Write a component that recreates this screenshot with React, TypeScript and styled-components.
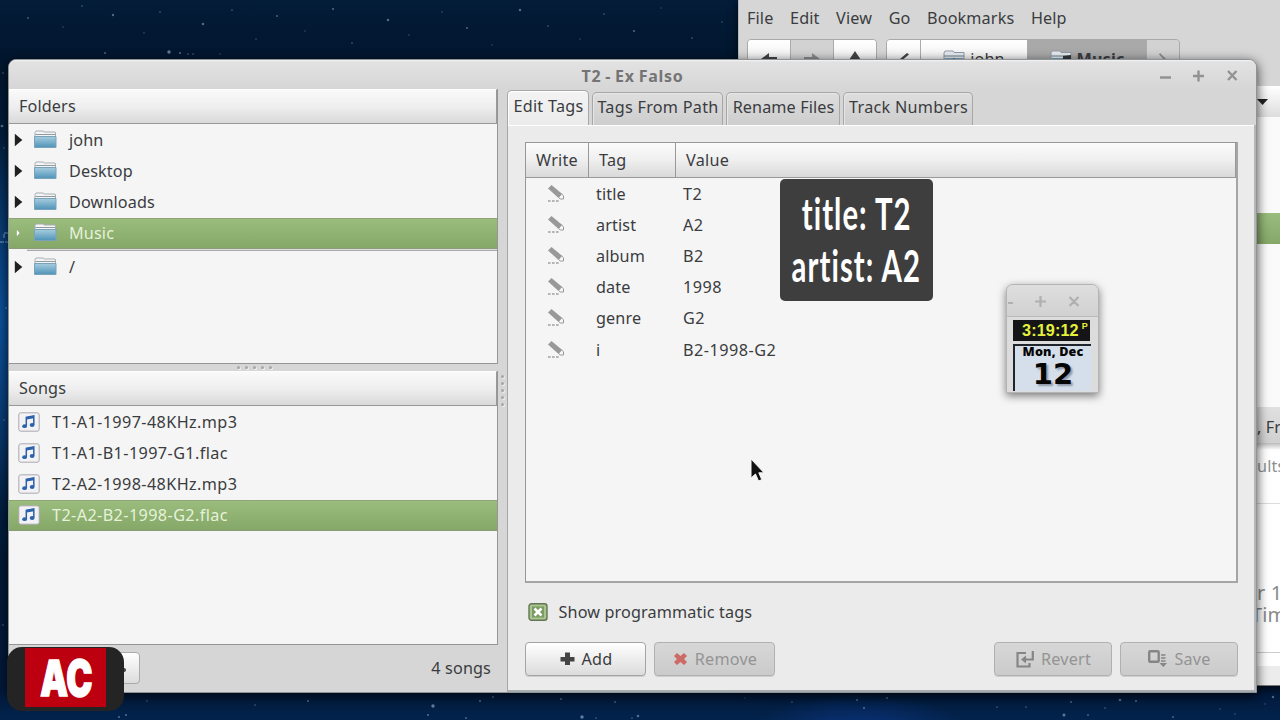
import React from "react";
import styled, { createGlobalStyle, css } from "styled-components";

const Global = createGlobalStyle`
  * { box-sizing: border-box; }
  body { margin: 0; overflow: hidden; font-family: "Noto Sans", "Open Sans", sans-serif; font-size: 16.2px; line-height: 22px; letter-spacing: 0.13px; color: #3a3c40; }
`;

const Desktop = styled.div`
  position: relative;
  width: 1280px;
  height: 720px;
  overflow: hidden;
  background:
    radial-gradient(ellipse 40px 190px at 0 320px, #0d529c, transparent),
    radial-gradient(ellipse 110px 40px at 860px 735px, #0b3480, transparent),
    linear-gradient(180deg, #031c38 0, #02162e 60px, #042c5c 350px, #021a36 560px, #02193a 690px, #03234c 720px);
`;
const Sky = styled.svg`
  position: absolute;
  inset: 0;
`;

/* ---------- file manager behind ---------- */
const FileWindow = styled.section`
  position: absolute;
  left: 738px;
  top: 0;
  width: 560px;
  height: 686px;
  display: flex;
  flex-direction: column;
  background: #d6d6d6;
  border-left: 1px solid #b4bac0;
  border-bottom: 1px solid #777;
  box-shadow: 0 3px 8px rgba(0, 0, 0, 0.7);
`;
const MenuBar = styled.nav`
  display: flex;
  gap: 16.6px;
  height: 39px;
  padding: 7px 0 0 8px;
`;
const ToolBar = styled.div`
  display: flex;
  gap: 9px;
  height: 48px;
  padding-left: 8px;
`;
const Group = styled.div`
  display: flex;
  height: 34px;
  border: 1px solid #a9a9a9;
  border-radius: 4px 4px 0 0;
  overflow: hidden;
`;
const Crumb = styled.div<{ $w: number; $tone?: "off" | "on" }>`
  width: ${(p) => p.$w}px;
  display: flex;
  align-items: center;
  justify-content: center;
  gap: 5px;
  padding-top: 6px;
  background: ${(p) => (p.$tone === "on" ? "#a9a9a9" : p.$tone === "off" ? "#d2d2d2" : "linear-gradient(#fff, #e8e8e8)")};
  font-weight: ${(p) => (p.$tone === "on" ? 700 : 400)};
  border-right: 1px solid #ababab;
  &:last-child { border-right: 0; }
`;
const Strip = styled.div<{ $h: number; $bg: string; $top?: number; $size?: number; $color?: string }>`
  height: ${(p) => p.$h}px;
  flex: none;
  background: ${(p) => p.$bg};
  padding: ${(p) => p.$top ?? 0}px 0 0 518px;
  font-size: ${(p) => p.$size ?? 16.2}px;
  color: ${(p) => p.$color ?? "#3a3c40"};
  white-space: nowrap;
  overflow: hidden;
`;
const Clipped = styled.div`
  margin-left: -6px;
`;

/* ---------- main window ---------- */
const Window = styled.main`
  position: absolute;
  left: 8px;
  top: 59px;
  width: 1249px;
  height: 634px;
  display: flex;
  flex-direction: column;
  background: #d6d6d6;
  border: 1px solid #8d9397;
  border-radius: 8px 8px 0 0;
  box-shadow: 0 3px 12px rgba(0, 0, 0, 0.75), inset 0 1px 0 #f5f5f5;
`;
const TitleBar = styled.header`
  flex: none;
  height: 29px;
  padding-top: 5px;
  border-radius: 7px 7px 0 0;
  background: linear-gradient(#f4f4f4 0, #e2e2e2 2px, #d6d6d6 100%);
  text-align: center;
  font-weight: 700;
  font-size: 16px;
  letter-spacing: 0.75px;
  word-spacing: -1px;
  color: #747474;
  position: relative;
`;
const WindowButtons = styled.svg`
  position: absolute;
  right: 0;
  top: 0;
`;
const Panes = styled.div`
  flex: 1;
  display: flex;
  min-height: 0;
`;
const Sidebar = styled.div`
  width: 489px;
  display: flex;
  flex-direction: column;
`;
const List = styled.section<{ $h: number }>`
  height: ${(p) => p.$h}px;
  flex: none;
  background: #f5f5f5;
  border-right: 1px solid #959595;
  border-bottom: 1px solid #959595;
`;
const ListHead = styled.div`
  height: 35px;
  padding: 5px 0 0 10px;
  background: linear-gradient(#fafafa, #ededed 55%, #d9d9d9);
  border-top: 1px solid #fff;
  border-bottom: 1px solid #999;
  border-right: 1px solid #999;
`;
const Row = styled.div<{ $on?: boolean; $song?: boolean }>`
  height: 31.25px;
  display: flex;
  align-items: center;
  gap: ${(p) => (p.$song ? 12 : 10)}px;
  padding-left: ${(p) => (p.$song ? 9 : 5)}px;
  letter-spacing: ${(p) => (p.$song ? 0.4 : 0.13)}px;
  ${(p) =>
    p.$on &&
    css`
      background: linear-gradient(#9abc7c, #85a767);
      color: #e6f2da;
      border-top: 1px solid #8da474;
      border-bottom: 1px solid #8a9a7a;
    `}
`;
const FileName = styled.span`
  padding-left: 1px;
`;
const Rule = styled.div`
  height: 2px;
  margin: 0 0 0 18px;
  background: #ddd;
  border-bottom: 1px solid #aaa;
`;
const Grip = styled.div<{ $vertical?: boolean }>`
  flex: none;
  display: flex;
  align-items: center;
  justify-content: center;
  flex-direction: ${(p) => (p.$vertical ? "column" : "row")};
  gap: ${(p) => (p.$vertical ? 4 : 5)}px;
  ${(p) => (p.$vertical ? "width: 9px; height: 603px; padding-right: 1px;" : "height: 7px; padding-left: 2px;")}
  i { width: 3px; height: 3px; border-radius: 2px; background: #a6a6a6; box-shadow: 1px 1px 0 #eee; }
`;
const Footer = styled.footer`
  flex: 1;
  display: flex;
  align-items: center;
  justify-content: space-between;
  padding: 0 7px 1px 92px;
`;
const SmallButton = styled.div`
  width: 39px;
  height: 32px;
  border: 1px solid #aaa;
  border-radius: 4px;
  background: linear-gradient(#fff, #dcdcdc);
  padding: 15px 0 0 20px;
  i { display: block; width: 4px; height: 4px; border-radius: 2px; background: #444; }
`;
const Notebook = styled.div`
  flex: 1;
  display: flex;
  flex-direction: column;
`;
const Tabs = styled.div`
  flex: none;
  height: 36px;
  display: flex;
  align-items: flex-end;
  gap: 3px;
  letter-spacing: 0.28px;
`;
const Tab = styled.div<{ $w: number; $on?: boolean; $tight?: boolean }>`
  width: ${(p) => p.$w}px;
  height: ${(p) => (p.$on ? 35 : 33)}px;
  padding-top: ${(p) => (p.$on ? 4 : 3)}px;
  padding-left: 1px;
  display: flex;
  justify-content: center;
  letter-spacing: ${(p) => (p.$tight ? "0.1px" : "inherit")};
  white-space: nowrap;
  border: 1px solid #a7a7a7;
  border-bottom: 0;
  border-radius: 5px 5px 0 0;
  background: ${(p) => (p.$on ? "linear-gradient(#f3f3f3, #ebebeb)" : "linear-gradient(#dedede, #cdcdcd)")};
  box-shadow: inset 1px 1px 0 ${(p) => (p.$on ? "#fff" : "#e6e6e6")};
`;
const Page = styled.div`
  flex: 1;
  display: flex;
  flex-direction: column;
  padding: 17px 16px 0 17px;
  background: #ebebeb;
  border-left: 1px solid #a7a7a7;
  border-right: 2px solid #b5b5b5;
  border-bottom: 2px solid #a8adaf;
  box-shadow: inset 0 1px 0 #fff;
`;
const Table = styled.div`
  height: 441px;
  border: 1px solid #979797;
  border-right-width: 2px;
  border-bottom-width: 2px;
  border-right-color: #a5a5a5;
  border-bottom-color: #a5a5a5;
  background: #f5f5f5;
`;
const TableRow = styled.div<{ $head?: boolean }>`
  display: grid;
  grid-template-columns: 63px 87px 1fr;
  height: ${(p) => (p.$head ? 35 : 31.2)}px;
  align-items: center;
  ${(p) => p.$head && css`background: linear-gradient(#fbfbfb, #efefef 50%, #d9d9d9); border-bottom: 1px solid #999;`}
`;
const HeadCell = styled.div`
  height: 34px;
  padding: 6px 0 0 10px;
  letter-spacing: 0.25px;
  border-right: 1px solid #999;
`;
const Cell = styled.div<{ $kind?: "icon" | "value" }>`
  padding-left: ${(p) => (p.$kind === "icon" ? 20 : 7)}px;
  letter-spacing: ${(p) => (p.$kind === "value" ? 0.5 : 0.13)}px;
  height: 22px;
`;
const CheckLine = styled.div`
  display: flex;
  align-items: center;
  gap: 11px;
  height: 22px;
  margin: 17.5px 0 0 2.5px;
`;
const Actions = styled.div`
  display: flex;
  gap: 8px;
  margin-top: 19.5px;
`;
const Spacer = styled.div`
  flex: 1;
`;
const Button = styled.div<{ $w: number; $off?: boolean }>`
  width: ${(p) => p.$w}px;
  height: 34px;
  display: flex;
  align-items: center;
  justify-content: center;
  gap: 7px;
  padding-left: 1px;
  letter-spacing: 0.2px;
  border: 1px solid ${(p) => (p.$off ? "#b0b0b0" : "#a4a4a4")};
  border-radius: 4px;
  color: ${(p) => (p.$off ? "#949494" : "#3a3c40")};
  background: ${(p) => (p.$off ? "linear-gradient(#d7d7d7, #cbcbcb)" : "linear-gradient(#fff, #dcdcdc)")};
  box-shadow: 0 1px 0 rgba(0, 0, 0, 0.12);
`;

/* ---------- floating items ---------- */
const Caption = styled.aside`
  position: absolute;
  left: 780px;
  top: 179px;
  width: 152.5px;
  height: 122px;
  border-radius: 5px;
  background: #3e3e3e;
  color: #fff;
  display: flex;
  flex-direction: column;
  align-items: center;
  padding-top: 8px;
  font-family: "Lato", sans-serif;
  font-weight: 700;
  font-size: 44px;
  line-height: 52px;
  letter-spacing: 1.6px;
  font-variant-ligatures: none;
  white-space: pre;
`;
const Squeeze = styled.span<{ $x: number }>`
  display: block;
  transform: scaleX(${(p) => p.$x});
`;
const Clock = styled.aside`
  position: absolute;
  left: 1006px;
  top: 284px;
  width: 93px;
  height: 109px;
  display: flex;
  flex-direction: column;
  background: #dcdcdc;
  border: 1px solid #b4b4b4;
  border-radius: 7px 7px 0 0;
  box-shadow: 0 3px 8px rgba(0, 0, 0, 0.5);
`;
const ClockBar = styled.div`
  height: 32px;
  background: linear-gradient(#dedede, #d1d1d1);
  border-bottom: 1px solid #bbb;
  border-radius: 6px 6px 0 0;
`;
const Lcd = styled.div`
  width: 77px;
  height: 21px;
  margin: 3px 0 0 6px;
  background: #151517;
  color: #e5f23c;
  font: 700 16.2px/21px "Liberation Sans", sans-serif;
  display: flex;
  padding-left: 9px;
  gap: 3px;
  sup { font-size: 9px; line-height: 12px; }
`;
const DateBox = styled.div`
  width: 78px;
  height: 47px;
  margin: 3px 0 0 6px;
  border-top: 2px solid #20242c;
  border-left: 2px solid #20242c;
  background: #d5dfec;
  color: #050505;
  display: flex;
  flex-direction: column;
  align-items: center;
  white-space: nowrap;
  font: 900 12.6px/12px "Noto Sans", sans-serif;
  letter-spacing: 0.15px;
  strong { font: 700 29px/32px "DejaVu Sans", sans-serif; letter-spacing: 0; text-shadow: 2px 2px 2px #8e98a8; }
`;
const Badge = styled.aside`
  position: absolute;
  left: 7px;
  top: 647px;
  width: 117px;
  height: 64px;
  border-radius: 15px;
  background: #242424;
  padding: 1px 18px 4px;
`;
const BadgeMark = styled.div`
  height: 59px;
  width: 81px;
  background: #bd0010;
  color: #fff;
  display: flex;
  justify-content: center;
  font: 900 50px/60px "Inter", sans-serif;
  letter-spacing: 0;
  padding-left: 1px;
  -webkit-text-stroke: 1.5px #fff;
`;
const Pointer = styled.svg`
  position: absolute;
  left: 750px;
  top: 458px;
`;

const FolderIcon = () => (
  <svg width="24" height="22" viewBox="0 0 24 22">
    <defs>
      <linearGradient id="fold" x1="0" y1="0" x2="0" y2="1">
        <stop offset="0" stopColor="#a6cddf" />
        <stop offset="1" stopColor="#4f93b8" />
      </linearGradient>
    </defs>
    <path d="M1 18V3.500L2 2h7l1.500 1H21l.5 1V18z" fill="#f4f4f4" stroke="#a6adb3" />
    <path d="M1.500 5.500h20" stroke="#8f9ba3" />
    <path d="M.5 7.500h21.500V18.500H.5z" fill="url(#fold)" stroke="#7aa3ba" />
  </svg>
);
const Expander = ({ on }: { on?: boolean }) => (
  <svg width="10" height="14" viewBox="0 0 10 14">
    {on ? <path d="M2.500 3L6 7l-3.500 4z" fill="#fff" stroke="#7d966a" strokeWidth=".5" /> : <path d="M.8.800L8.300 7 .8 13.200z" fill="#202020" />}
  </svg>
);
const NoteIcon = () => (
  <svg width="22" height="20" viewBox="0 0 22 20">
    <rect x=".8" y=".8" width="20.400" height="18.400" rx="2" fill="#f2f2f5" stroke="#a8a8b0" />
    <path d="M8.300 14V5.300L15.800 4v8.700" fill="none" stroke="#2c62aa" strokeWidth="1.500" />
    <path d="M8.300 6.300l7.500-1.300" stroke="#2c62aa" strokeWidth="2.500" />
    <ellipse cx="6.600" cy="14.200" rx="2.400" ry="1.900" fill="#2c62aa" />
    <ellipse cx="14.100" cy="13" rx="2.400" ry="1.900" fill="#2c62aa" />
  </svg>
);
const PencilIcon = () => (
  <svg width="20" height="20" viewBox="0 0 20 20">
    <path d="M2 5.500L5.500 2l10.500 8.800-3.500 4.200z" fill="#999" />
    <path d="M12.600 14.500l3-3.600 1.900 1.800v3.300h-3.300z" fill="#f5f5f5" stroke="#9a9a9a" />
    <path d="M2 18h11.500" stroke="#a0a0a0" strokeWidth="1.600" strokeDasharray="2.600 1.400" />
  </svg>
);
const PathFolder = ({ dark }: { dark?: boolean }) => (
  <svg width="22" height="18" viewBox="0 0 22 18">
    <path d="M1 17V3l1-2h8l1 1.500h10V17z" fill="#e8edf2" stroke="#8f9aa5" />
    <path d="M1 6h20" stroke="#75818d" />
    <path d="M1.500 8h19v9h-19z" fill="#7ba8c4" />
    {dark ? <path d="M13 6l8-1v11h-8z" fill="#34383d" /> : <path d="M7 12l4-4 4 4v4H7z" fill="#26557c" />}
  </svg>
);
const BarArrow = ({ d, c = "#444" }: { d: string; c?: string }) => (
  <svg width="18" height="18" viewBox="0 0 18 18"><path d={d} fill={c} /></svg>
);

const stars: [number, number, number][] = [
  [105, 53, 1.2], [169, 52, 2], [180, 53, 1.3], [188, 54, 1], [193, 54, 1], [3, 73, 1], [2, 126, 1.6], [4, 148, 1], [220, 54, 0.8],
  [28, 18, 1.1], [63, 27, 0.8], [82, 6, 1], [113, 15, 1.4], [144, 33, 0.9], [160, 12, 1], [203, 24, 1.5], [232, 10, 1], [256, 39, 0.9],
  [277, 16, 1.2], [305, 31, 0.8], [333, 9, 1.3], [352, 43, 1], [388, 20, 1.5], [409, 35, 0.9], [442, 12, 0.9], [467, 28, 1.2],
  [492, 45, 0.8], [520, 10, 1.5], [548, 26, 1], [580, 39, 0.8], [604, 14, 1], [634, 31, 1.3], [661, 8, 0.8], [692, 38, 1], [722, 22, 0.9],
  [147, 701, 1], [255, 705, 1], [308, 701, 1.3], [126, 715, 1.3], [119, 717, 1.3], [433, 706, 2], [428, 715, 1.3], [466, 718, 1.2],
  [480, 701, 1.3], [493, 697, 1.2], [561, 699, 1.2], [615, 702, 1.1], [582, 717, 2], [638, 716, 1.5], [632, 718, 1], [596, 718, 1],
  [792, 702, 1], [857, 700, 1.2], [864, 708, 1.3], [887, 698, 1.2], [745, 698, 0.8], [997, 707, 1], [1026, 707, 1],
  [1071, 702, 1.2], [1064, 715, 1.8], [1088, 715, 1.1], [1120, 700, 1.6], [1136, 701, 1.3], [1105, 708, 1], [1173, 717, 1.2],
  [1220, 709, 0.9], [1235, 714, 0.9], [1273, 697, 1.4], [1265, 704, 0.9], [3, 625, 1], [4, 420, 1], [6, 308, 1.2],
];

const folders = ["john", "Desktop", "Downloads", "Music", "/"];
const songs = ["T1-A1-1997-48KHz.mp3", "T1-A1-B1-1997-G1.flac", "T2-A2-1998-48KHz.mp3", "T2-A2-B2-1998-G2.flac"];
const tags = [["title", "T2"], ["artist", "A2"], ["album", "B2"], ["date", "1998"], ["genre", "G2"], ["i", "B2-1998-G2"]];
const dots = [0, 1, 2, 3, 4].map((n) => <i key={n} />);

export default function App() {
  return (
    <>
      <Global />
      <Desktop>
        <Sky width="1280" height="720">
          {stars.map(([x, y, r], i) => (
            <circle key={i} cx={x} cy={y} r={r * 0.85} fill="#8fb2d2" opacity={0.25 + r * 0.2} />
          ))}
          <path d="M8 233H4v6M0 242h8" stroke="#7fa5cb" fill="none" strokeDasharray="4 1" />
        </Sky>

        <FileWindow>
          <MenuBar>
            {["File", "Edit", "View", "Go", "Bookmarks", "Help"].map((m) => <span key={m}>{m}</span>)}
          </MenuBar>
          <ToolBar>
            <Group>
              <Crumb $w={43}><BarArrow d="M1 9l8-6v4h8v4H9v4z" /></Crumb>
              <Crumb $w={43} $tone="off"><BarArrow d="M17 9L9 3v4H1v4h8v4z" c="#8c8c8c" /></Crumb>
              <Crumb $w={42}><BarArrow d="M9 1l6 9h-4v7H7v-7H3z" /></Crumb>
            </Group>
            <Group>
              <Crumb $w={34}><BarArrow d="M12 3l2 1.500L8.500 9l5.500 5-2 1.500L5 9z" /></Crumb>
              <Crumb $w={107}><PathFolder />john</Crumb>
              <Crumb $w={119} $tone="on"><PathFolder dark />Music</Crumb>
              <Crumb $w={32} $tone="off"><BarArrow d="M6 3L5 4.500 9.500 9 5 13.500 6.500 15 12 9z" c="#8c8c8c" /></Crumb>
            </Group>
          </ToolBar>
          <Strip $h={31} $bg="linear-gradient(#fff, #ddd)" $top={13}>
            <svg width="12" height="8" style={{ display: "block" }}><path d="M0 0h11L5.500 6z" fill="#222" /></svg>
          </Strip>
          <Strip $h={96} $bg="#fafafa" />
          <Strip $h={31} $bg="linear-gradient(#9abc7c, #85a767)" />
          <Strip $h={163} $bg="#fafafa" />
          <Strip $h={36} $bg="linear-gradient(#e0e0e0, #d0d0d0)" $top={9}>, Fr</Strip>
          <Strip $h={60} $bg="linear-gradient(#bbb 0, #fff 7px)" $top={12} $color="#8c9092">ults</Strip>
          <Strip $h={1} $bg="#ddd" />
          <Strip $h={148} $bg="#fff" $top={78} $size={20} $color="#8a8a8a">
            r 1
            <Clipped>Tim</Clipped>
          </Strip>
          <Strip $h={1} $bg="#ccc" />
          <Strip $h={13} $bg="#fff" />
          <Strip $h={19} $bg="#ececec" />
        </FileWindow>

        <Window>
          <TitleBar>
            T2 - Ex Falso
            <WindowButtons width="110" height="29" viewBox="0 0 110 29" fill="none" stroke="#929292" strokeWidth="2.400">
              <path d="M14 17.500h11M47 16h11M52.500 10.500v11M82 11l8.500 9M90.500 11l-8.500 9" />
            </WindowButtons>
          </TitleBar>
          <Panes>
            <Sidebar>
              <List $h={275}>
                <ListHead>Folders</ListHead>
                {folders.map((f) => (
                  <React.Fragment key={f}>
                    {f === "/" && <Rule />}
                    <Row $on={f === "Music"}>
                      <Expander on={f === "Music"} />
                      <FolderIcon />
                      <FileName>{f}</FileName>
                    </Row>
                  </React.Fragment>
                ))}
              </List>
              <Grip>{dots}</Grip>
              <List $h={274}>
                <ListHead>Songs</ListHead>
                {songs.map((s, i) => (
                  <Row key={s} $song $on={i === 3}>
                    <NoteIcon />
                    <span>{s}</span>
                  </Row>
                ))}
              </List>
              <Footer>
                <SmallButton><i /></SmallButton>
                <span>4 songs</span>
              </Footer>
            </Sidebar>
            <Grip $vertical>{dots}</Grip>
            <Notebook>
              <Tabs>
                <Tab $w={82} $on>Edit Tags</Tab>
                <Tab $w={131}>Tags From Path</Tab>
                <Tab $w={114} $tight>Rename Files</Tab>
                <Tab $w={130}>Track Numbers</Tab>
              </Tabs>
              <Page>
                <Table>
                  <TableRow $head>
                    <HeadCell>Write</HeadCell>
                    <HeadCell>Tag</HeadCell>
                    <HeadCell>Value</HeadCell>
                  </TableRow>
                  {tags.map(([t, v]) => (
                    <TableRow key={t}>
                      <Cell $kind="icon"><PencilIcon /></Cell>
                      <Cell>{t}</Cell>
                      <Cell $kind="value">{v}</Cell>
                    </TableRow>
                  ))}
                </Table>
                <CheckLine>
                  <svg width="20" height="18" viewBox="0 0 20 18">
                    <rect x="1" y=".8" width="18" height="16.400" rx="2.500" fill="#a9c58f" stroke="#647554" strokeWidth="1.400" />
                    <rect x="4" y="3.500" width="12" height="11" fill="#7b9b62" />
                    <path d="M6.500 5.500l7 7M13.500 5.500l-7 7" stroke="#fff" strokeWidth="2.600" />
                  </svg>
                  Show programmatic tags
                </CheckLine>
                <Actions>
                  <Button $w={121}>
                    <svg width="15" height="14" viewBox="0 0 15 14"><path d="M5 .5h5V5h4.500v4.500H10V13H5V9.500H.5V5H5z" fill="#444" /></svg>
                    Add
                  </Button>
                  <Button $w={121} $off>
                    <svg width="15" height="14" viewBox="0 0 15 14"><path d="M4 1l3.500 3L11 1l3 3-3 3 3 3-3 3-3.500-3L4 13l-3-3 3-3-3-3z" fill="#cc6a67" /></svg>
                    Remove
                  </Button>
                  <Spacer />
                  <Button $w={118} $off>
                    <svg width="18" height="17" viewBox="0 0 18 17" fill="none" stroke="#858585" strokeWidth="2.200">
                      <path d="M10 2H1.500v13.500h12V12M16.800 0v8.500H8" />
                      <path d="M5 8.500l5-4v8z" fill="#858585" stroke="none" />
                    </svg>
                    Revert
                  </Button>
                  <Button $w={118} $off>
                    <svg width="19" height="18" viewBox="1 0 19 18" fill="none" stroke="#858585">
                      <rect x="2.200" y="1.200" width="9.500" height="10.500" rx="1" strokeWidth="2.400" />
                      <path d="M14 5h4.500M14 8h4.500M14 11h4.500" strokeWidth="1.500" />
                      <path d="M12.500 13h7.500L16.300 17z" fill="#858585" stroke="none" />
                    </svg>
                    Save
                  </Button>
                </Actions>
              </Page>
            </Notebook>
          </Panes>
        </Window>

        <Caption>
          <Squeeze $x={0.665}>title: T2</Squeeze>
          <Squeeze $x={0.665}>artist: A2</Squeeze>
        </Caption>

        <Clock>
          <ClockBar>
            <svg width="91" height="31" viewBox="0 0 91 31" fill="none" stroke="#b0b0b0" strokeWidth="2.200">
              <path d="M1 18h5M28 16.500h11M33.500 11v11M62.500 12l9 9M71.500 12l-9 9" />
            </svg>
          </ClockBar>
          <Lcd>3:19:12<sup>P</sup></Lcd>
          <DateBox>Mon, Dec<strong>12</strong></DateBox>
        </Clock>

        <Badge>
          <BadgeMark><Squeeze $x={0.7}>AC</Squeeze></BadgeMark>
        </Badge>

        <Pointer width="16" height="25" viewBox="0 0 16 25">
          <path d="M1 1v19l4.500-4 3 7 3.300-1.400-3-6.800H14z" fill="#111" stroke="#f5f5f5" strokeWidth="1" />
        </Pointer>
      </Desktop>
    </>
  );
}
